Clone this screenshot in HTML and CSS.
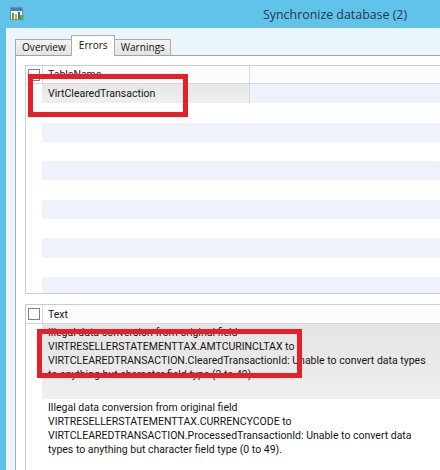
FILE: index.html
```html
<!DOCTYPE html>
<html>
<head>
<meta charset="utf-8">
<link rel="stylesheet" href="styles.css">
</head>
<body>
<div class="window">
  <header class="titlebar">
    <svg class="appicon" width="14" height="14" viewBox="0 0 14 14">
      <rect x="0.5" y="0.5" width="12" height="12" fill="#f4f4f4" stroke="#7d8a93"/>
      <rect x="1" y="1" width="11" height="3" fill="#3a7fc8"/>
      <rect x="2" y="6" width="2" height="6" fill="#4caf3c"/>
      <rect x="5" y="7" width="2" height="5" fill="#f0a020"/>
      <rect x="8" y="5" width="2" height="7" fill="#2f6fb8"/>
      <rect x="10" y="8" width="3.5" height="5.5" fill="#58b03a"/>
    </svg>
    <div class="title">Synchronize database (2)</div>
  </header>
  <div class="client">
    <div class="tabs">
      <div class="tab">Overview</div>
      <div class="tab active">Errors</div>
      <div class="tab">Warnings</div>
    </div>
    <div class="page">
      <div class="grid grid-tables">
        <div class="ghead">
          <span class="chkcol"><span class="chk"></span></span>
          <div class="hcell w208">TableName</div>
          <div class="hcell fill"></div>
        </div>
        <div class="gbody">
          <div class="grow alt"><span class="chkcol"></span><div class="cell sel w208">VirtClearedTransaction</div><div class="cell fill"></div></div>
          <div class="grow"><span class="chkcol"></span><div class="cell fill"></div></div>
          <div class="grow alt"><span class="chkcol"></span><div class="cell fill"></div></div>
          <div class="grow"><span class="chkcol"></span><div class="cell fill"></div></div>
          <div class="grow alt"><span class="chkcol"></span><div class="cell fill"></div></div>
          <div class="grow"><span class="chkcol"></span><div class="cell fill"></div></div>
          <div class="grow alt"><span class="chkcol"></span><div class="cell fill"></div></div>
          <div class="grow"><span class="chkcol"></span><div class="cell fill"></div></div>
          <div class="grow alt"><span class="chkcol"></span><div class="cell fill"></div></div>
          <div class="grow"><span class="chkcol"></span><div class="cell fill"></div></div>
          <div class="grow alt"><span class="chkcol"></span><div class="cell fill"></div></div>
        </div>
      </div>
      <div class="grid grid-text">
        <div class="ghead ghead-tall">
          <span class="chkcol"><span class="chk"></span></span>
          <div class="hcell fill">Text</div>
        </div>
        <div class="gbody">
          <div class="trow sel-row">
            <span class="chkcol"></span>
            <div class="tcell">Illegal data conversion from original field<br>VIRTRESELLERSTATEMENTTAX.AMTCURINCLTAX to<br>VIRTCLEAREDTRANSACTION.ClearedTransactionId: Unable to convert data types<br>to anything but character field type (2 to 49).</div>
          </div>
          <div class="trow">
            <span class="chkcol"></span>
            <div class="tcell">Illegal data conversion from original field<br>VIRTRESELLERSTATEMENTTAX.CURRENCYCODE to<br>VIRTCLEAREDTRANSACTION.ProcessedTransactionId: Unable to convert data<br>types to anything but character field type (0 to 49).</div>
          </div>
        </div>
      </div>
    </div>
  </div>
  <div class="mark mark1"></div>
  <div class="mark mark2"></div>
</div>
</body>
</html>
```
FILE: styles.css
```css
* { box-sizing: border-box; }
html, body { margin: 0; padding: 0; }
body {
  width: 440px;
  height: 470px;
  overflow: hidden;
  font-family: Roboto, "Open Sans", sans-serif;
  font-size: 10.5px;
  color: #141414;
}
.window {
  position: relative;
  width: 440px;
  height: 470px;
  background: #5fc1e9;
  overflow: hidden;
  display: flex;
  flex-direction: column;
}
.titlebar {
  height: 28px;
  flex: none;
  display: flex;
  align-items: center;
  background: #62c3ea;
}
.appicon { margin-left: 10px; flex: none; }
.title {
  margin-left: 239px;
  font-family: "Open Sans", sans-serif;
  font-size: 12.4px;
  color: #1c394b;
  white-space: nowrap;
}
.client {
  flex: 1;
  margin-left: 6px;
  background: #eaf5fc;
  padding-top: 7px;
  display: flex;
  flex-direction: column;
  min-height: 0;
}
.tabs {
  display: flex;
  align-items: flex-end;
  height: 20px;
  padding-left: 9px;
  flex: none;
  font-family: "Open Sans", sans-serif;
  font-size: 10.1px;
}
.tab {
  height: 16px;
  padding: 0 5px 0 6px;
  border: 1px solid #acacac;
  border-bottom: none;
  background: linear-gradient(#f2f2f2, #e4e4e4);
  line-height: 14px;
  white-space: nowrap;
  margin-right: -1px;
}
.tab.active {
  height: 21px;
  margin-bottom: -1px;
  background: #ffffff;
  position: relative;
  z-index: 1;
  line-height: 18px;
  padding: 0 6px 0 7px;
}
.page {
  flex: 1;
  margin-left: 9px;
  background: #ffffff;
  border-top: 1px solid #a3a3a3;
  border-left: 1px solid #a8b0b6;
  padding: 9px 0 0 9px;
  min-height: 0;
  overflow: hidden;
}
.grid {
  border: 1px solid #c6cdd4;
  border-right: none;
  overflow: hidden;
  background: #fff;
}
.grid-tables { height: 229px; }
.grid-text { margin-top: 10px; height: 200px; }
.ghead {
  display: flex;
  height: 18px;
  border-bottom: 1px solid #d2d8de;
  background: #fdfcfb;
}
.ghead-tall { height: 19px; }
.chkcol {
  width: 16px;
  flex: none;
  display: flex;
  align-items: center;
  background: #fff;
}
.chk {
  display: block;
  width: 12px;
  height: 12px;
  margin-left: 2px;
  border: 1px solid #808080;
  background: #fff;
}
.hcell {
  border-left: 1px solid #d6dbe0;
  padding-left: 5px;
  display: flex;
  align-items: center;
  white-space: nowrap;
}
.w208 { width: 208px; flex: none; border-right: 1px solid #d6dbe0; }
.fill { flex: 1; border-left: none; }
.ghead-tall .fill { border-left: 1px solid #d6dbe0; }
.grow {
  display: flex;
  height: 19.3px;
}
.grow .cell { display: flex; align-items: center; padding-left: 6px; white-space: nowrap; }
.grow.alt .cell { background: #eef3fb; }
.grow .cell.sel { background: linear-gradient(#e7e7e7, #eeeeee); }
.trow {
  display: flex;
}
.tcell {
  flex: 1;
  padding: 2px 0 17px 6px;
  line-height: 14px;
  white-space: nowrap;
}
.sel-row .tcell { background: linear-gradient(#e4e4e4, #efefef); }
.mark {
  position: absolute;
  border: 5px solid #e5202a;
  z-index: 5;
}
.mark1 { left: 28px; top: 74px; width: 160px; height: 43px; }
.mark2 { left: 37px; top: 329px; width: 265px; height: 49px; }
```
